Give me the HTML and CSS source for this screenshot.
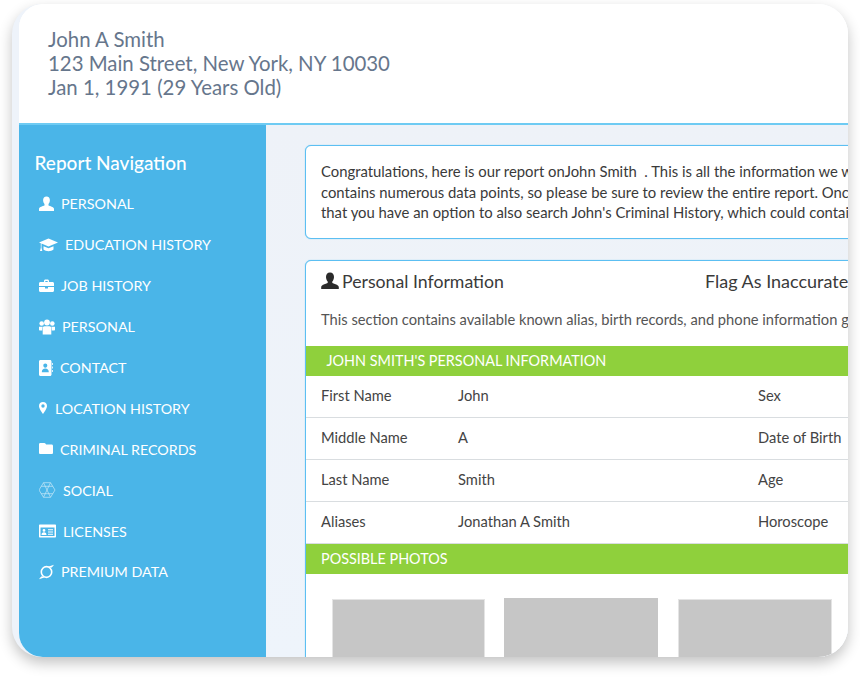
FILE: index.html
```html
<!DOCTYPE html>
<html lang="en">
<head>
<meta charset="utf-8">
<title>Report</title>
<link rel="stylesheet" href="styles.css">
</head>
<body>
<div class="frame">
  <div class="panel">
    <header class="head">
      <div>John A Smith</div>
      <div>123 Main Street, New York, NY 10030</div>
      <div>Jan 1, 1991 (29 Years Old)</div>
    </header>
    <div class="body">
      <nav class="side">
        <h2 class="side-title">Report Navigation</h2>
        <ul class="nav">
          <li><svg width="22" height="18" viewBox="0 0 22 18"><path fill="#fff" d="M7.500 1.500c2.200 0 3.400 1.700 3.400 3.800 0 1.500-.7 3-1.400 3.800v1.400c1.600.8 5 1.300 5.500 3.200v2.300H0v-2.300c.5-1.900 3.900-2.400 5.500-3.200V9.100C4.800 8.300 4.100 6.800 4.100 5.300c0-2.100 1.200-3.800 3.400-3.800z"/></svg>PERSONAL</li>
          <li><svg width="26" height="18" viewBox="0 0 26 18"><path fill="#fff" d="M9.500 2.500 19 6.500l-9.500 4-7-3v4.200l.8 3.300H1l.8-3.300V7.200L0 6.500z"/><path fill="#fff" d="M4.500 10.200l5 2.100 5-2.100v3.300c-1.400 1.200-3 1.700-5 1.700s-3.600-.5-5-1.700z"/></svg>EDUCATION HISTORY</li>
          <li><svg width="22" height="18" viewBox="0 0 22 18"><path fill="#fff" d="M5 5V4c0-1 .7-1.500 1.500-1.500h2c.8 0 1.500.5 1.500 1.500v1h3.500c.9 0 1.500.6 1.500 1.500V9H0V6.500C0 5.600.6 5 1.500 5zm1.300 0h2.400V3.900H6.300zM0 10h6v1.500h3V10h6v3.500c0 .9-.6 1.500-1.500 1.500h-12C.6 15 0 14.400 0 13.500z"/></svg>JOB HISTORY</li>
          <li><svg width="23" height="18" viewBox="0 0 23 18"><g fill="#fff"><circle cx="8" cy="4.500" r="2.900"/><circle cx="2.700" cy="5.500" r="2.300"/><circle cx="13.300" cy="5.500" r="2.300"/><path d="M0 8.800h3.800c-.4.700-.6 1.500-.6 2.300v1.400H1c-.6 0-1-.4-1-1zM16 8.800h-3.800c.4.700.6 1.500.6 2.300v1.400H15c.6 0 1-.4 1-1zM5.500 8.300h5c1 0 1.800.9 1.800 2v6.200H3.700v-6.200c0-1.100.8-2 1.800-2z"/></g></svg>PERSONAL</li>
          <li><svg width="21" height="18" viewBox="0 0 21 18"><path fill="#fff" fill-rule="evenodd" d="M1.500 1h9.500c.9 0 1.500.6 1.500 1.500v13c0 .9-.6 1.500-1.500 1.500H1.500C.6 17 0 16.400 0 15.500v-13C0 1.600.6 1 1.500 1zM6.300 4.500c-1.200 0-2 .9-2 2.100 0 1.200.8 2.200 2 2.200s2-1 2-2.200c0-1.200-.8-2.100-2-2.100zM2.800 13.200h7c0-2.200-1.400-3.600-3.500-3.600s-3.500 1.400-3.500 3.600z"/><path fill="#fff" d="M13 4h.8v2H13zm0 3.500h.8v2H13zm0 3.500h.8v2H13z"/></svg>CONTACT</li>
          <li><svg width="16" height="18" viewBox="0 0 16 18"><path fill="#fff" fill-rule="evenodd" d="M4 3c2.300 0 4 1.700 4 3.900C8 9.300 5.400 13 4 15 2.600 13 0 9.300 0 6.900 0 4.700 1.700 3 4 3zm0 2.300a1.700 1.700 0 1 0 0 3.400 1.700 1.700 0 0 0 0-3.400z"/></svg>LOCATION HISTORY</li>
          <li><svg width="21" height="18" viewBox="0 0 21 18"><path fill="#fff" d="M1.300 3h3.900c.7 0 1.100.3 1.400.8l.5.8h5.600c.7 0 1.300.6 1.300 1.300v6.800c0 .7-.6 1.300-1.300 1.300H1.300C.6 14 0 13.400 0 12.700V4.300C0 3.600.6 3 1.300 3z"/></svg>CRIMINAL RECORDS</li>
          <li><svg width="24" height="18" viewBox="0 0 24 18"><g fill="none" stroke="#fff" stroke-width=".7" opacity=".7"><path d="M4.500 1.700h7L16 9l-4.500 7.300h-7L0 9z"/><path d="M4.500 1.700 11.500 16.300M11.500 1.700 4.500 16.300M2.200 5.300h11.600M2.200 12.700h11.600"/></g></svg>SOCIAL</li>
          <li><svg width="24" height="18" viewBox="0 0 24 18"><path fill="#fff" fill-rule="evenodd" d="M1 2.500h15c.6 0 1 .4 1 1v11c0 .6-.4 1-1 1H1c-.6 0-1-.4-1-1v-11c0-.6.4-1 1-1zM1.500 5.500v8.500h14V5.500zM5 7a1.400 1.400 0 1 0 0 2.800A1.400 1.400 0 0 0 5 7zM2.500 13h5c0-1.900-1-2.800-2.500-2.800S2.500 11.100 2.500 13zM9 7.200h5v1H9zm0 2.300h5v1H9zm0 2.300h5v1H9z"/></svg>LICENSES</li>
          <li><svg width="22" height="18" viewBox="0 0 22 18"><ellipse fill="none" stroke="#fff" stroke-width="1.600" cx="7.500" cy="9" rx="5.200" ry="5.400"/><path fill="#fff" d="M9 3.700 15 1.800c-.8 1.300-1.700 2.300-2.800 3zM6 14.300l-6 1.900c.8-1.300 1.700-2.300 2.800-3z"/></svg>PREMIUM DATA</li>
        </ul>
      </nav>
      <main class="main">
        <section class="card intro">
          <p>Congratulations, here is our report on<span>John Smith</span>&nbsp;&nbsp;. This is all the information we were able to find. This report</p>
          <p>contains numerous data points, so please be sure to review the entire report. Once you have reviewed it, note</p>
          <p>that you have an option to also search John's Criminal History, which could contain additional records.</p>
        </section>
        <section class="card info">
          <div class="info-head">
            <div class="info-title"><svg width="18" height="18" viewBox="0 0 18 18"><path fill="#2b2b2b" d="M9 .5c2.600 0 4 2 4 4.400 0 1.800-.8 3.500-1.700 4.500v1.700c1.900 1 5.900 1.500 6.500 3.800V17H.2v-2.100c.6-2.300 4.600-2.800 6.500-3.800V9.400C5.800 8.400 5 6.700 5 4.900 5 2.500 6.400.5 9 .5z"/></svg>Personal Information</div>
            <div class="flag">Flag As Inaccurate</div>
          </div>
          <p class="info-desc">This section contains available known alias, birth records, and phone information gathered for this person.</p>
          <div class="bar bar-first">JOHN SMITH'S PERSONAL INFORMATION</div>
          <div class="row"><span>First Name</span><span>John</span><span>Sex</span></div>
          <div class="row"><span>Middle Name</span><span>A</span><span>Date of Birth</span></div>
          <div class="row"><span>Last Name</span><span>Smith</span><span>Age</span></div>
          <div class="row"><span>Aliases</span><span>Jonathan A Smith</span><span>Horoscope</span></div>
          <div class="bar">POSSIBLE PHOTOS</div>
          <div class="photos">
            <div class="photo photo-first"></div>
            <div class="photo photo-mid"></div>
            <div class="photo"></div>
          </div>
        </section>
      </main>
    </div>
  </div>
</div>
</body>
</html>
```

FILE: styles.css
```css
* { box-sizing: border-box; }
html, body { margin: 0; padding: 0; background: #fff; }
body { width: 860px; height: 678px; padding: 4px 12px 21px; overflow: hidden; font-family: "Lato", "Liberation Sans", sans-serif; }
.frame { height: 653px; background: #eef3fa; border-radius: 30px; box-shadow: 0 6px 14px rgba(0,0,0,.24); overflow: hidden; padding-left: 7px; }
.panel { height: 100%; display: flex; flex-direction: column; background: #fff; border-radius: 24px 0 0 24px; overflow: hidden; }
.head { height: 121px; flex: none; padding: 23px 0 0 29px; background: #fff; color: #66768c; font-size: 20.400px; line-height: 24px; border-bottom: 2px solid #6ecbf3; }
.body { flex: 1; display: flex; min-height: 0; }
.side { width: 247px; flex: none; background: #4ab5e8; color: #fff; padding: 26px 0 0 15.500px; }
.side-title { margin: 0 0 8.500px; font-size: 19px; font-weight: 500; line-height: 24px; }
.nav { list-style: none; margin: 0; padding: 0 0 0 4.500px; }
.nav li { display: flex; align-items: center; height: 40.900px; font-size: 14.300px; }
.nav svg { flex: none; }
.main { flex: 1; min-width: 0; overflow: hidden; background: linear-gradient(#eef2f8, #eef4fb); padding: 20px 0 0 39px; }
.card { width: 620px; background: #fff; border: 1px solid #5cbff2; border-radius: 6px; color: #3a3a3a; box-shadow: 0 0 1px #5cbff2; }
.intro { height: 94px; padding: 15px 0 0 15px; margin-bottom: 21px; font-size: 14.850px; line-height: 20.500px; }
.intro p { margin: 0; white-space: nowrap; }
.info { height: 420px; border-radius: 6px 6px 0 0; }
.info-head { display: flex; justify-content: space-between; align-items: center; padding: 4px 0 0 15px; height: 36px; font-size: 17.700px; }
.info-title { display: flex; align-items: center; gap: 3px; }
.flag { width: 219px; white-space: nowrap; font-size: 18px; }
.info-desc { margin: 0; padding: 12px 0 0 15px; height: 49px; font-size: 14.700px; line-height: 20px; white-space: nowrap; color: #555; }
.bar { height: 30px; background: #8fd03c; color: #fff; font-size: 14.400px; line-height: 30px; padding-left: 15px; }
.bar-first { padding-left: 20.500px; }
.row { display: grid; grid-template-columns: 137px 300px 1fr; align-items: center; height: 42px; padding: 0 0 3px 15px; font-size: 14.700px; color: #444; border-bottom: 1px solid #d9dde0; }
.photos { display: flex; gap: 19px; padding: 25px 0 0 26px; }
.photo { width: 154px; height: 120px; flex: none; background: #c6c6c6; border: 1px solid #e4e4e4; }
.photo-first { width: 153px; }
.photo-mid { margin: -1px 1px 0 0; border: 0; }
```
